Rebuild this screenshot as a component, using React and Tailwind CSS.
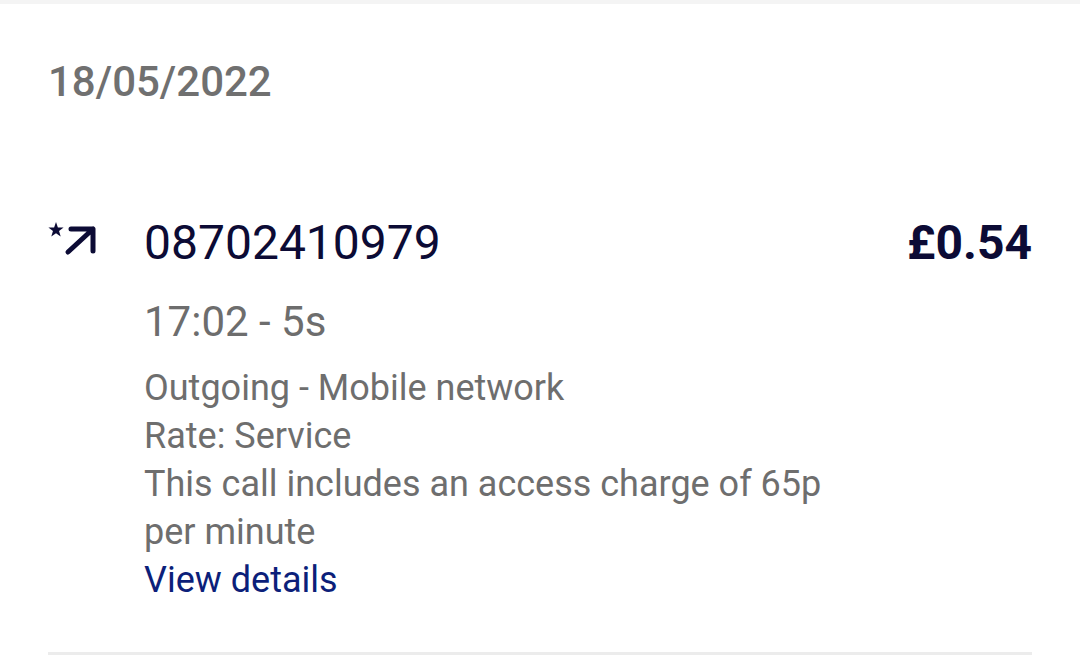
export default function App() {
  return (
    <div className="w-[1080px] h-[655px] bg-white overflow-hidden font-['Roboto',sans-serif]">
      <div className="h-1 bg-[#f4f4f4]" />
      <div className="px-12">
        <div className="pt-[54px] text-[42px] leading-[48px] font-medium text-[#707070]">18/05/2022</div>

        <div className="mt-[109px] flex">
          <div className="w-[97px] shrink-0 h-14 relative">
            <svg width="60" height="50" viewBox="0 0 60 50" className="absolute left-0 top-0">
              <path
                d="M8 7 L9.88 12.41 L15.61 12.53 L11.04 15.99 L12.7 21.47 L8 18.2 L3.3 21.47 L4.96 15.99 L0.39 12.53 L6.12 12.41 Z"
                fill="#0c0b35"
              />
              <path
                d="M20 37 L45 14 M23 14 H45 V36"
                stroke="#0c0b35"
                strokeWidth="5"
                fill="none"
                strokeLinecap="round"
                strokeLinejoin="round"
              />
            </svg>
          </div>
          <div className="flex-1">
            <div className="flex justify-between text-[48px] leading-[56px] text-[#0c0b35]">
              <span className="-ml-px">08702410979</span>
              <span className="font-bold">£0.54</span>
            </div>
            <div className="mt-[27px] -ml-px text-[42px] leading-[48px] text-[#6d6d6d]">17:02 - 5s</div>
            <div className="mt-[18px] -ml-px text-[36px] leading-[48px] text-[#6e6e6e] max-w-[700px]">
              <p>Outgoing - Mobile network</p>
              <p>Rate: Service</p>
              <p>This call includes an access charge of 65p per minute</p>
              <p className="text-[#0c1f7a]">View details</p>
            </div>
          </div>
        </div>

        <div className="mt-12 h-[3px] bg-[#ececec]" />
      </div>
    </div>
  )
}
